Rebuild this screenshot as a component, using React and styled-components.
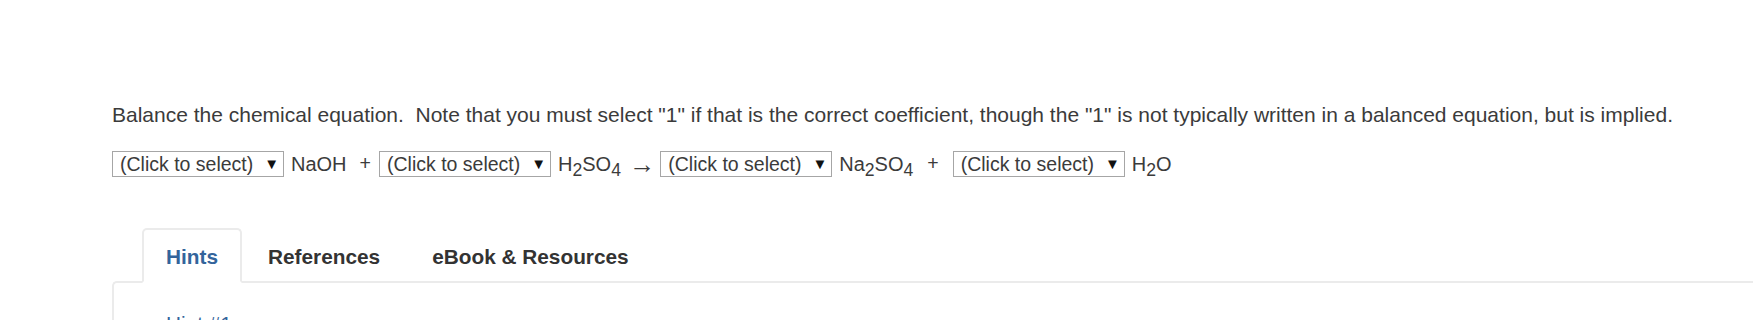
import styled, { createGlobalStyle } from 'styled-components'

const GlobalStyle = createGlobalStyle`
  html, body {
    margin: 0;
    padding: 0;
    background: #fff;
  }
  body {
    font-family: 'Liberation Sans', Arial, sans-serif;
    color: #3b3b3b;
  }
`

const Page = styled.div`
  padding: 101px 0 0 112px;
  overflow: hidden;
  height: 320px;
  box-sizing: border-box;
`

const Prompt = styled.p`
  margin: 0;
  font-size: 21px;
  line-height: 28px;
  white-space: nowrap;
`

const Equation = styled.div`
  display: flex;
  align-items: center;
  margin-top: 22px;
  font-size: 19.5px;
  line-height: 26px;
`

const SelectBox = styled.div`
  box-sizing: border-box;
  width: 172px;
  height: 26px;
  display: flex;
  align-items: center;
  padding: 0 0 0 7px;
  border: 1px solid #a6a6a6;
  background: #fff;
  color: #3b3b3b;
  cursor: pointer;
  white-space: nowrap;
`

const Caret = styled.span`
  font-size: 15px;
  color: #111;
  margin-left: 11px;
`

const Species = styled.span`
  margin-left: 7px;
  font-size: 20px;
  white-space: nowrap;

  sub {
    font-size: 0.88em;
    line-height: 0;
    vertical-align: -0.28em;
  }
`

const Op = styled.span`
  margin-left: ${(p) => p.$before}px;
  margin-right: ${(p) => p.$after}px;
  font-size: ${(p) => (p.$big ? '1.35em' : '1em')};
  line-height: 1;
`

const Tabs = styled.div`
  margin-top: 51px;
`

const TabList = styled.div`
  display: flex;
  padding-left: 30px;
  margin-bottom: -2px;
  position: relative;
  z-index: 1;
`

const Tab = styled.div`
  box-sizing: border-box;
  height: 55px;
  padding: 0 ${(p) => p.$pad}px 0 ${(p) => p.$pad}px;
  display: flex;
  align-items: center;
  padding-top: 3px;
  font-size: 20.8px;
  font-weight: 700;
  color: ${(p) => (p.$active ? '#33649b' : '#333')};
  background: ${(p) => (p.$active ? '#fff' : 'transparent')};
  border: 2px solid ${(p) => (p.$active ? '#ebebeb' : 'transparent')};
  border-bottom-color: ${(p) => (p.$active ? '#fff' : 'transparent')};
  border-radius: 5px 5px 0 0;
`

const Panel = styled.div`
  border: 2px solid #ebebeb;
  border-right: none;
  border-radius: 5px 0 0 0;
  height: 80px;
  padding: 29px 0 0 52px;
`

const HintLink = styled.a`
  font-size: 20.8px;
  line-height: 24px;
  color: #33649b;
  text-decoration: none;
`

const Subs = ({ parts }) => (
  <Species>
    {parts.map((p, i) =>
      typeof p === 'number' ? <sub key={i}>{p}</sub> : <span key={i}>{p}</span>
    )}
  </Species>
)

const Select = () => (
  <SelectBox>
    (Click to select)
    <Caret>▼</Caret>
  </SelectBox>
)

const App = () => {
  return (
    <>
      <GlobalStyle />
      <Page>
        <Prompt>
          Balance the chemical equation.&nbsp; Note that you must select "1" if
          that is the correct coefficient, though the "1" is not typically
          written in a balanced equation, but is implied.
        </Prompt>
        <Equation>
          <Select />
          <Subs parts={['NaOH']} />
          <Op $before={13} $after={8}>+</Op>
          <Select />
          <Subs parts={['H', 2, 'SO', 4]} />
          <Op $big $before={8} $after={5}>→</Op>
          <Select />
          <Subs parts={['Na', 2, 'SO', 4]} />
          <Op $before={14} $after={14}>+</Op>
          <Select />
          <Subs parts={['H', 2, 'O']} />
        </Equation>
        <Tabs>
          <TabList>
            <Tab $active $pad={22}>Hints</Tab>
            <Tab $pad={24}>References</Tab>
            <Tab $pad={24}>eBook &amp; Resources</Tab>
          </TabList>
          <Panel>
            <HintLink href="#">Hint #1</HintLink>
          </Panel>
        </Tabs>
      </Page>
    </>
  )
}

export default App
